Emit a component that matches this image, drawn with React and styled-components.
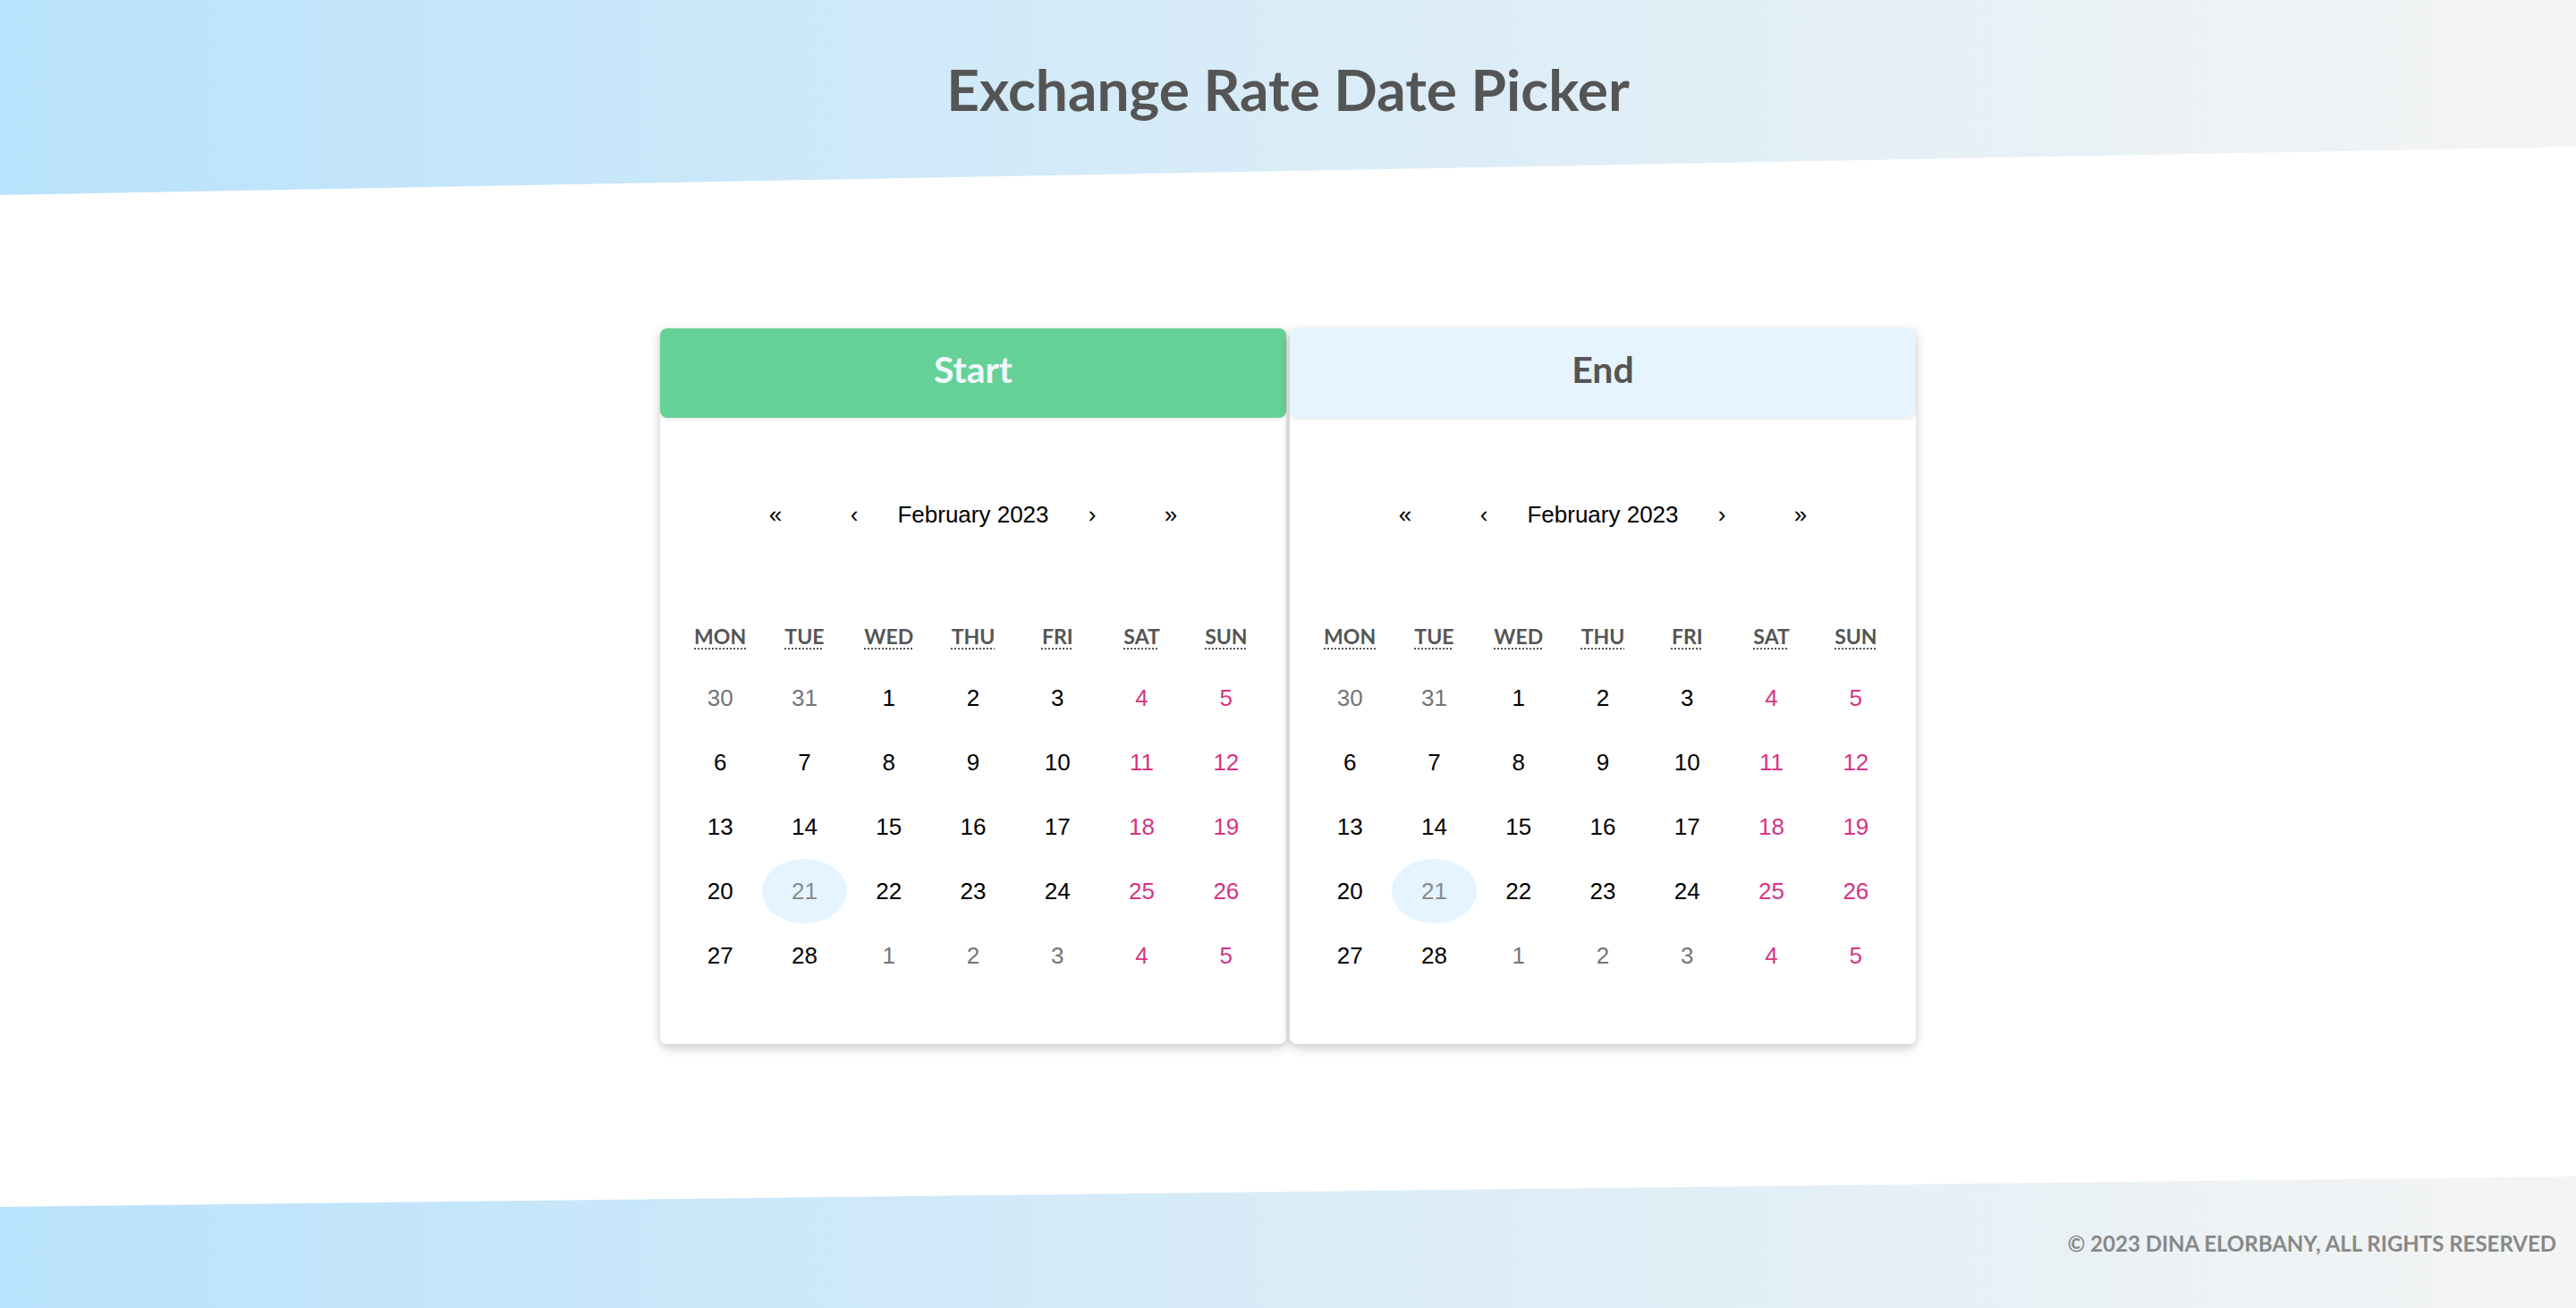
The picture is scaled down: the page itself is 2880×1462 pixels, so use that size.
import React from "react";
import styled, { createGlobalStyle } from "styled-components";

const GlobalStyle = createGlobalStyle`
  html, body { margin: 0; padding: 0; background: #ffffff; }
  body { font-family: "Lato", "Liberation Sans", sans-serif; }
  * { box-sizing: border-box; }
`;

const Page = styled.div`
  min-height: 100vh;
  display: flex;
  flex-direction: column;
`;

const Header = styled.header`
  height: 218px;
  background: linear-gradient(90deg, #b9e2fc 0%, #d6ebf8 45%, #f4f4f4 100%);
  clip-path: polygon(0 0, 100% 0, 100% 164px, 0 218px);
  display: flex;
  justify-content: center;
  align-items: flex-start;
  padding-top: 61px;
`;

const Title = styled.h1`
  margin: 0;
  font-family: "Lato", sans-serif;
  font-weight: 700;
  font-size: 64px;
  line-height: 77px;
  color: #555555;
`;

const Main = styled.main`
  flex: 1;
  display: flex;
  justify-content: center;
  align-items: flex-start;
  gap: 4px;
  padding-top: 149px;
`;

const Panel = styled.section`
  width: 700px;
  background: #ffffff;
  border-radius: 8px;
  box-shadow: 0 4px 12px rgba(0, 0, 0, 0.22);
  display: flex;
  flex-direction: column;
`;

const Tab = styled.div`
  height: 100px;
  border-radius: 8px;
  background: ${(p) => (p.$active ? "#66d197" : "#e6f4ff")};
  color: ${(p) => (p.$active ? "#f0f8ff" : "#555555")};
  box-shadow: 0 2px 3px rgba(0, 0, 0, 0.08);
  display: flex;
  align-items: center;
  justify-content: center;
  padding-bottom: 10px;
  font-family: "Lato", sans-serif;
  font-weight: 700;
  font-size: 41px;
`;

const CalendarBody = styled.div`
  padding: 78px 20px 63px;
  font-family: "Liberation Sans", Arial, sans-serif;
`;

const Nav = styled.div`
  height: 60px;
  display: flex;
  justify-content: center;
  align-items: center;
`;

const NavButton = styled.button`
  width: 88px;
  height: 60px;
  border: none;
  background: none;
  padding: 0;
  font-family: "Liberation Sans", Arial, sans-serif;
  font-size: 26px;
  color: #000;
  cursor: pointer;
`;

const NavLabel = styled.button`
  width: 178px;
  height: 60px;
  border: none;
  background: none;
  padding: 0;
  font-family: "Liberation Sans", Arial, sans-serif;
  font-size: 26px;
  color: #000;
  white-space: nowrap;
`;

const Weekdays = styled.div`
  margin-top: 86px;
  height: 40px;
  display: grid;
  grid-template-columns: repeat(7, 1fr);
  align-items: center;
`;

const Weekday = styled.div`
  text-align: center;
  font-family: "Lato", sans-serif;
  font-weight: 700;
  font-size: 23px;
  color: #555555;
  text-transform: uppercase;

  abbr {
    text-decoration: underline dotted;
    text-underline-offset: 4px;
    text-decoration-thickness: 2px;
  }
`;

const Days = styled.div`
  margin-top: 13px;
  display: grid;
  grid-template-columns: repeat(7, 1fr);
  grid-auto-rows: 72px;
`;

const Tile = styled.button`
  border: none;
  padding: 0;
  border-radius: 50%;
  background: ${(p) => (p.$today ? "#e6f4ff" : "transparent")};
  font-family: "Liberation Sans", Arial, sans-serif;
  font-size: 26px;
  color: ${(p) =>
    p.$weekend ? "#d63384" : p.$today ? "#8a8a8a" : p.$neighbor ? "#757575" : "#000000"};
  cursor: pointer;
`;

const Footer = styled.footer`
  height: 147px;
  background: linear-gradient(90deg, #b9e2fc 0%, #d6ebf8 45%, #f4f4f4 100%);
  clip-path: polygon(0 34px, 100% 0, 100% 100%, 0 100%);
  display: flex;
  justify-content: flex-end;
  align-items: flex-start;
  padding: 60px 22px 0 0;
`;

const Copy = styled.p`
  margin: 0;
  font-family: "Lato", sans-serif;
  font-weight: 700;
  font-size: 24px;
  line-height: 29px;
  color: #888888;
  text-transform: uppercase;
`;

const WEEKDAYS = [
  ["Mon", "Monday"],
  ["Tue", "Tuesday"],
  ["Wed", "Wednesday"],
  ["Thu", "Thursday"],
  ["Fri", "Friday"],
  ["Sat", "Saturday"],
  ["Sun", "Sunday"],
];

const buildDays = () => {
  const days = [];
  days.push({ n: 30, neighbor: true });
  days.push({ n: 31, neighbor: true });
  for (let i = 1; i <= 28; i++) days.push({ n: i });
  for (let i = 1; i <= 5; i++) days.push({ n: i, neighbor: true });
  return days.map((d, idx) => ({
    ...d,
    weekend: idx % 7 >= 5,
    today: !d.neighbor && d.n === 21,
  }));
};

const DAYS = buildDays();

function Calendar({ label, active }) {
  return (
    <Panel>
      <Tab $active={active}>{label}</Tab>
      <CalendarBody>
        <Nav>
          <NavButton>«</NavButton>
          <NavButton>‹</NavButton>
          <NavLabel>February 2023</NavLabel>
          <NavButton>›</NavButton>
          <NavButton>»</NavButton>
        </Nav>
        <Weekdays>
          {WEEKDAYS.map(([s, l]) => (
            <Weekday key={s}>
              <abbr title={l}>{s}</abbr>
            </Weekday>
          ))}
        </Weekdays>
        <Days>
          {DAYS.map((d, i) => (
            <Tile
              key={i}
              $neighbor={d.neighbor}
              $weekend={d.weekend}
              $today={d.today}
            >
              {d.n}
            </Tile>
          ))}
        </Days>
      </CalendarBody>
    </Panel>
  );
}

export default function App() {
  return (
    <Page>
      <GlobalStyle />
      <Header>
        <Title>Exchange Rate Date Picker</Title>
      </Header>
      <Main>
        <Calendar label="Start" active />
        <Calendar label="End" />
      </Main>
      <Footer>
        <Copy>© 2023 Dina Elorbany, All rights reserved</Copy>
      </Footer>
    </Page>
  );
}
